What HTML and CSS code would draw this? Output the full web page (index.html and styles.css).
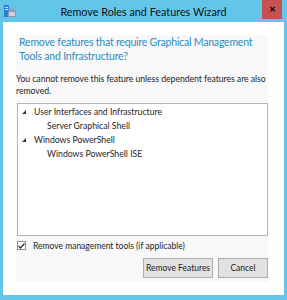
FILE: index.html
```html
<!DOCTYPE html>
<html lang="en">
<head>
  <meta charset="UTF-8">
  <title>Remove Roles and Features Wizard</title>
  <link rel="stylesheet" href="styles.css">
</head>
<body>
<div class="window">
  <div class="titlebar"><!--标题栏-->
    <svg class="app-icon" width="12" height="13" viewBox="0 0 12 13">
      <rect x="0" y="0" width="5" height="12" fill="#2f7fd0"/>
      <rect x="1" y="2" width="3" height="1" fill="#cfe6fb"/>
      <rect x="1" y="4" width="3" height="1" fill="#cfe6fb"/>
      <rect x="4" y="6" width="8" height="6" fill="#8c9aa6"/>
      <rect x="5" y="7" width="6" height="4" fill="#c9d3db"/>
      <rect x="6" y="4" width="4" height="2" fill="none" stroke="#8c9aa6" stroke-width="1"/>
    </svg>
    <span class="title">Remove Roles and Features Wizard</span>
    <span class="close">&#x2715;</span>
  </div>
  <div class="client">
    <div class="panel">
      <h1 class="heading">Remove features that require Graphical Management Tools and Infrastructure?</h1>
      <p class="message">You cannot remove this feature unless dependent features are also removed.</p>
      <ul class="tree">
        <li class="node"><span class="arrow"></span>User Interfaces and Infrastructure</li>
        <li class="leaf">Server Graphical Shell</li>
        <li class="node"><span class="arrow"></span>Windows PowerShell</li>
        <li class="leaf">Windows PowerShell ISE</li>
      </ul>
      <label class="check">
        <span class="box">
          <svg width="7" height="6" viewBox="0 0 7 6"><path d="M0.5 3 L2.5 5 L6.5 0.5" fill="none" stroke="#333" stroke-width="1.3"/></svg>
        </span>
        Remove management tools (if applicable)
      </label>
      <div class="buttons">
        <button class="btn btn-wide">Remove Features</button>
        <button class="btn">Cancel</button>
      </div>
    </div>
  </div>
</div>
</body>
</html>
```

FILE: styles.css
```css
* {
  margin: 0;
  padding: 0;
  box-sizing: border-box;
}
ul {
  list-style: none;
}
body {
  width: 287px;
  height: 300px;
  background-color: #63c5ea;
  font-family: Lato, "Open Sans", sans-serif;
  color: #1e1e1e;
  overflow: hidden;
}
.window {
  height: 300px;
  display: flex;
  flex-direction: column;
}
.titlebar {
  height: 22px;
  display: flex;
  align-items: center;
  position: relative;
  padding-left: 4px;
}
.app-icon {
  display: block;
}
.title {
  flex: 1;
  text-align: center;
  font-size: 10.8px;
  color: #111;
  padding-right: 16px;
}
.close {
  position: absolute;
  top: 0;
  right: 5px;
  width: 20px;
  height: 19px;
  background-color: #c75050;
  color: #000;
  font-size: 8px;
  font-weight: bold;
  line-height: 19px;
  text-align: center;
}
.client {
  flex: 1;
  margin: 0 3px 5px 3px;
  background-color: #fff;
  padding: 13px 16px 13px 13px;
  display: flex;
}
.panel {
  flex: 1;
  background-color: #f8f8f8;
  display: flex;
  flex-direction: column;
  padding: 0 0 4px 0;
}
.heading {
  font-size: 10.5px;
  font-weight: normal;
  line-height: 14px;
  letter-spacing: -0.2px;
  color: #2a8dbf;
  padding-left: 3px;
}
.message {
  font-size: 8.7px;
  line-height: 12px;
  letter-spacing: -0.05px;
  margin-top: 10px;
}
.tree {
  margin-top: 6px;
  height: 133px;
  margin-left: 1px;
  background-color: #fff;
  border: 1px solid #b5b5b5;
  padding: 1px 0 0 4px;
  font-size: 8.7px;
  line-height: 14px;
}
.node {
  display: flex;
  align-items: center;
}
.arrow {
  width: 0;
  height: 0;
  border-left: 4px solid transparent;
  border-bottom: 4px solid #333;
  margin-right: 8px;
}
.leaf {
  padding-left: 25px;
}
.check {
  display: flex;
  align-items: center;
  height: 9px;
  margin-top: 5px;
  margin-left: 1px;
  font-size: 8.5px;
}
.box {
  width: 9px;
  height: 9px;
  border: 1px solid #8f8f8f;
  background-color: #fff;
  margin-right: 7px;
  display: flex;
  align-items: center;
  justify-content: center;
}
.buttons {
  display: flex;
  justify-content: flex-end;
  gap: 5px;
  margin-top: auto;
}
.btn {
  width: 50px;
  height: 20px;
  background-color: #e1e1e1;
  border: 1px solid #adadad;
  font-family: Lato, "Open Sans", sans-serif;
  font-size: 8.5px;
  color: #1e1e1e;
  white-space: nowrap;
}
.btn-wide {
  width: 70px;
}
```
